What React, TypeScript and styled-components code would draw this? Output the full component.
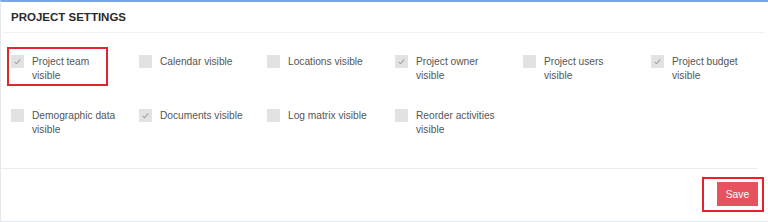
import styled, { createGlobalStyle } from 'styled-components';

const GlobalStyle = createGlobalStyle`
  html, body {
    margin: 0;
    padding: 0;
    background: #ffffff;
  }
  body {
    font-family: "Liberation Sans", Arial, sans-serif;
  }
`;

const Panel = styled.section`
  width: 768px;
  height: 222px;
  box-sizing: border-box;
  background: #ffffff;
  border-top: 2px solid #79a5e6;
  border-left: 1px solid #e4e8ee;
  border-bottom: 1px solid #e4e8ee;
  display: flex;
  flex-direction: column;
`;

const Header = styled.header`
  height: 30px;
  margin: 0 3px 0 2px;
  padding: 0 8px;
  display: flex;
  align-items: center;
  border-bottom: 1px solid #f0f1f3;
  color: #2b2b2b;
  font-size: 11.5px;
  font-weight: 700;
`;

const Body = styled.div`
  padding: 22px 11px 0 10px;
  display: grid;
  grid-template-columns: repeat(6, 128px);
  grid-auto-rows: 54px;
  height: 113px;
  border-bottom: 1px solid #e8ecf2;
  margin: 0 11px 0 0;
`;

const Item = styled.label<{ highlighted?: boolean }>`
  position: relative;
  display: flex;
  align-items: flex-start;
  gap: 8px;
  align-self: start;
  ${({ highlighted }) => highlighted && `
    &::after {
      content: '';
      position: absolute;
      top: -8px;
      left: -4px;
      width: 97px;
      height: 35px;
      border: 2px solid #e3242d;
    }
  `}
`;

const Box = styled.span`
  flex: 0 0 13px;
  width: 13px;
  height: 13px;
  background: #e2e2e2;
  display: flex;
  align-items: center;
  justify-content: center;
`;

const Label = styled.span`
  max-width: 86px;
  color: #555555;
  font-size: 10.2px;
  line-height: 14px;
`;

const Footer = styled.footer`
  flex: 1;
  display: flex;
  justify-content: flex-end;
  align-items: flex-start;
  padding: 13px 10px 0 0;
`;

const SaveButton = styled.button`
  position: relative;
  width: 41px;
  height: 24px;
  border: none;
  background: #e8515e;
  color: #ffffff;
  font-family: "Liberation Sans", Arial, sans-serif;
  font-size: 10.3px;
  padding: 0;
  cursor: pointer;
  &::after {
    content: '';
    position: absolute;
    top: -5px;
    left: -15px;
    right: -6px;
    bottom: -6px;
    border: 2px solid #e3242d;
  }
`;

const Check = () => (
  <svg width="9" height="9" viewBox="0 0 9 9">
    <path d="M1.6 4.8 L3.6 6.6 L7.4 2.4" fill="none" stroke="#a2a2a2" strokeWidth="1.1" />
  </svg>
);

const settings = [
  { label: 'Project team visible', checked: true, highlighted: true },
  { label: 'Calendar visible', checked: false },
  { label: 'Locations visible', checked: false },
  { label: 'Project owner visible', checked: true },
  { label: 'Project users visible', checked: false },
  { label: 'Project budget visible', checked: true },
  { label: 'Demographic data visible', checked: false },
  { label: 'Documents visible', checked: true },
  { label: 'Log matrix visible', checked: false },
  { label: 'Reorder activities visible', checked: false },
];

export default function App() {
  return (
    <>
      <GlobalStyle />
      <Panel>
        <Header>PROJECT SETTINGS</Header>
        <Body>
          {settings.map((s) => (
            <Item key={s.label} highlighted={s.highlighted}>
              <Box>{s.checked && <Check />}</Box>
              <Label>{s.label}</Label>
            </Item>
          ))}
        </Body>
        <Footer>
          <SaveButton>Save</SaveButton>
        </Footer>
      </Panel>
    </>
  );
}
